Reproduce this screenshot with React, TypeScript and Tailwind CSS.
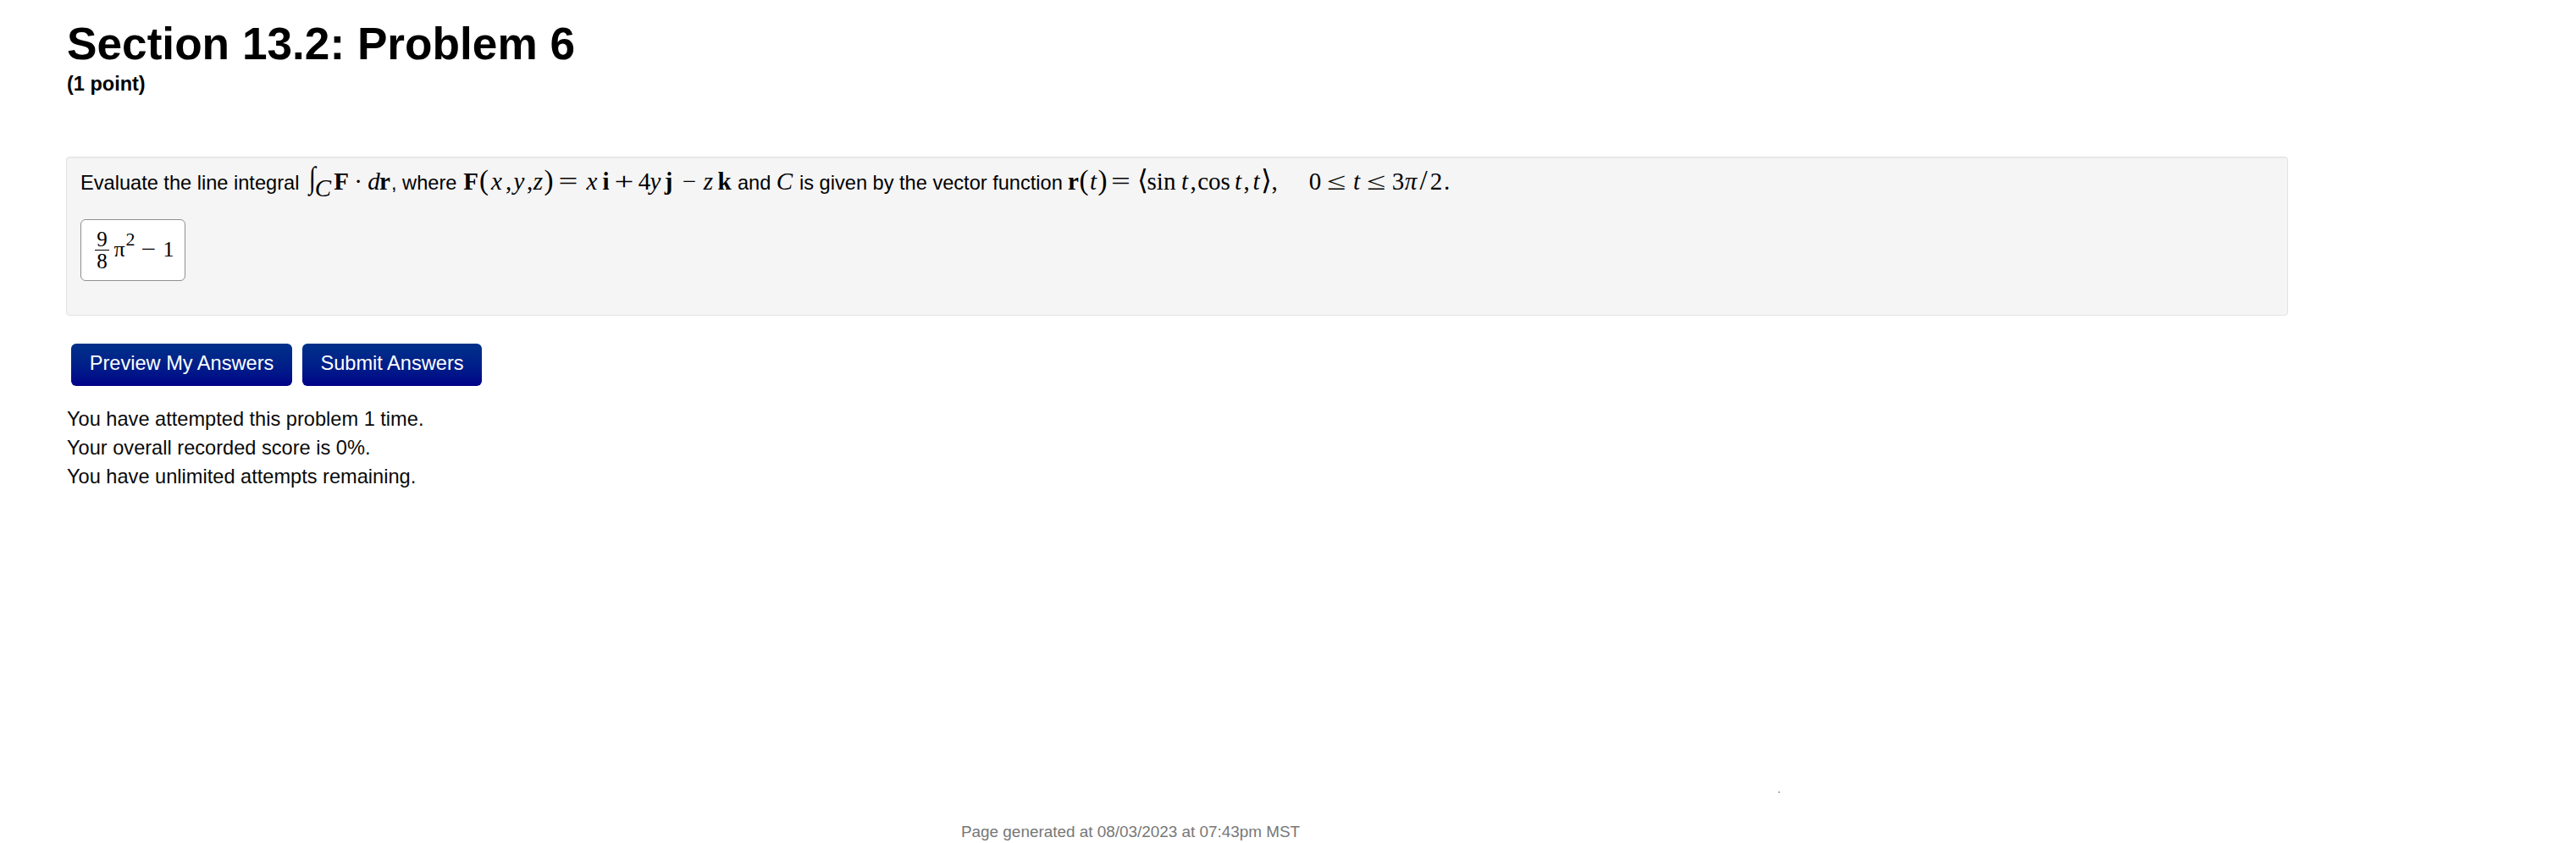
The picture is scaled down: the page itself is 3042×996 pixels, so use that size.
const serif = "font-['Liberation_Serif','Times_New_Roman',serif]";
const base = `${serif} inline-flex justify-center text-[29px] leading-[34px] whitespace-pre`;
const m = base;
const i = `${base} italic`;
const b = `${base} font-bold`;
const big = `${base} text-[33px]`;
const op = `${base} scale-x-[1.4]`;

export default function App() {
  return (
    <div className="relative h-[996px] overflow-hidden bg-white pl-[78px] font-['Liberation_Sans',Arial,sans-serif] text-black">
      <h1 className="pl-[1px] pt-[23px] text-[53.2px] leading-[58px] font-bold">Section 13.2: Problem 6</h1>
      <div className="mt-[4px] pl-[1px] text-[23.5px] leading-[28px] font-bold">(1 point)</div>

      <div className="mt-[72px] h-[188px] w-[2624px] rounded-[4px] border border-[#e3e3e3] bg-[#f5f5f5] pt-[10px] pl-[16px] shadow-[inset_0_1px_1px_rgba(0,0,0,0.05)]">
        <p className="flex h-[36px] items-baseline text-[23.6px] leading-[34px] whitespace-nowrap">
          <span className="w-[258px]">Evaluate the line integral</span>
          <span className={`${i} ml-[7px] w-[18px] origin-bottom scale-y-[1.25]`}>∫</span>
          <span className={`${i} -ml-[3px] w-[13px] translate-y-[8px] text-[18px]`}>C</span>
          <span className={`${b} ml-[7px] w-[16px]`}>F</span>
          <span className={`${m} ml-[9px] w-[6px]`}>·</span>
          <span className={`${i} ml-[10px] w-[11px]`}>d</span>
          <span className={`${b} ml-[2px] w-[11px]`}>r</span>
          <span className="ml-[2px] w-[76px]">, where</span>
          <span className={`${b} ml-[9px] w-[18px]`}>F</span>
          <span className={`${big} ml-[2px] w-[9px]`}>(</span>
          <span className={`${i} ml-[2px] w-[17px]`}>x</span>
          <span className={`${m} ml-[3px] w-[5px]`}>,</span>
          <span className={`${i} ml-[3px] w-[14px]`}>y</span>
          <span className={`${m} ml-[3px] w-[5px]`}>,</span>
          <span className={`${i} ml-[2px] w-[11px]`}>z</span>
          <span className={`${big} ml-[3px] w-[8px]`}>)</span>
          <span className={`${op} ml-[8px] w-[22px]`}>=</span>
          <span className={`${i} ml-[9px] w-[16px]`}>x</span>
          <span className={`${b} ml-[3px] w-[11px]`}>i</span>
          <span className={`${op} ml-[5px] w-[22px]`}>+</span>
          <span className={`${m} ml-[6px] w-[14px]`}>4</span>
          <span className={`${i} -ml-[1px] w-[14px]`}>y</span>
          <span className={`${b} ml-[3px] w-[11px]`}>j</span>
          <span className={`${m} ml-[11px] w-[16px]`}>−</span>
          <span className={`${i} ml-[9px] w-[11px]`}>z</span>
          <span className={`${b} ml-[5px] w-[17px]`}>k</span>
          <span className="ml-[7px] w-[39px]">and</span>
          <span className={`${i} ml-[6px] w-[21px]`}>C</span>
          <span className="ml-[7px] w-[310px]">is given by the vector function</span>
          <span className={`${b} ml-[8px] w-[11px]`}>r</span>
          <span className={`${big} ml-[3px] w-[8px]`}>(</span>
          <span className={`${i} ml-[3px] w-[8px]`}>t</span>
          <span className={`${big} ml-[3px] w-[8px]`}>)</span>
          <span className={`${op} ml-[8px] w-[19px]`}>=</span>
          <span className={`${big} ml-[12px] w-[9px]`}>⟨</span>
          <span className={`${m} ml-[1px] w-[33px]`}>sin</span>
          <span className={`${i} ml-[6px] w-[10px]`}>t</span>
          <span className={`${m} ml-[3px] w-[4px]`}>,</span>
          <span className={`${m} ml-[5px] w-[35px]`}>cos</span>
          <span className={`${i} ml-[6px] w-[10px]`}>t</span>
          <span className={`${m} ml-[3px] w-[4px]`}>,</span>
          <span className={`${i} ml-[5px] w-[9px]`}>t</span>
          <span className={`${big} ml-[3px] w-[8px]`}>⟩</span>
          <span className={`${m} ml-[4px] w-[4px]`}>,</span>
          <span className={`${m} ml-[40px] w-[12px]`}>0</span>
          <span className={`${op} ml-[11px] w-[17px]`}>≤</span>
          <span className={`${i} ml-[11px] w-[8px]`}>t</span>
          <span className={`${op} ml-[11px] w-[17px]`}>≤</span>
          <span className={`${m} ml-[11px] w-[12px]`}>3</span>
          <span className={`${i} ml-[1px] w-[16px]`}>π</span>
          <span className={`${big} ml-[2px] w-[10px]`}>/</span>
          <span className={`${m} ml-[3px] w-[14px]`}>2</span>
          <span className={`${m} ml-[3px] w-[5px]`}>.</span>
        </p>

        <div className={`${serif} mt-[27px] flex h-[73px] w-[124px] items-center rounded-[6px] border border-[#8f8f8f] bg-white pl-[16px]`}>
          <span className="flex w-[17px] flex-col items-center text-[25px] leading-[20px]">
            <span className="mb-[2px]">9</span>
            <span className="h-[1px] w-[17px] bg-black" />
            <span className="mt-[3px]">8</span>
          </span>
          <span className="flex items-baseline text-[26px] leading-[30px]">
            <span className="ml-[6px] flex w-[12px] justify-center">π</span>
            <span className="ml-[2px] flex w-[10px] -translate-y-[13px] justify-center text-[22px]">2</span>
            <span className="ml-[8px] flex w-[17px] scale-x-[1.2] justify-center">−</span>
            <span className="ml-[10px] flex w-[10px] justify-center">1</span>
          </span>
        </div>
      </div>

      <div className="mt-[33px] ml-[6px] flex gap-[12px]">
        <button className="h-[50px] w-[261px] rounded-[6px] bg-gradient-to-b from-[#00308a] to-[#000088] pb-[2px] text-[23.6px] text-white">Preview My Answers</button>
        <button className="h-[50px] w-[212px] rounded-[6px] bg-gradient-to-b from-[#00308a] to-[#000088] pb-[2px] text-[23.6px] text-white">Submit Answers</button>
      </div>

      <div className="mt-[22px] pl-[1px] text-[23.6px] leading-[34px] text-[#0a0a0a]">
        <div>You have attempted this problem 1 time.</div>
        <div>Your overall recorded score is 0%.</div>
        <div>You have unlimited attempts remaining.</div>
      </div>

      <div className="mt-[391px] ml-[1057px] text-[18.9px] leading-[24px] text-[#777777]">Page generated at 08/03/2023 at 07:43pm MST</div>
      <div className="absolute top-[935px] left-[2100px] h-[2px] w-[2px] bg-[#b9a9ad]" />
    </div>
  );
}
